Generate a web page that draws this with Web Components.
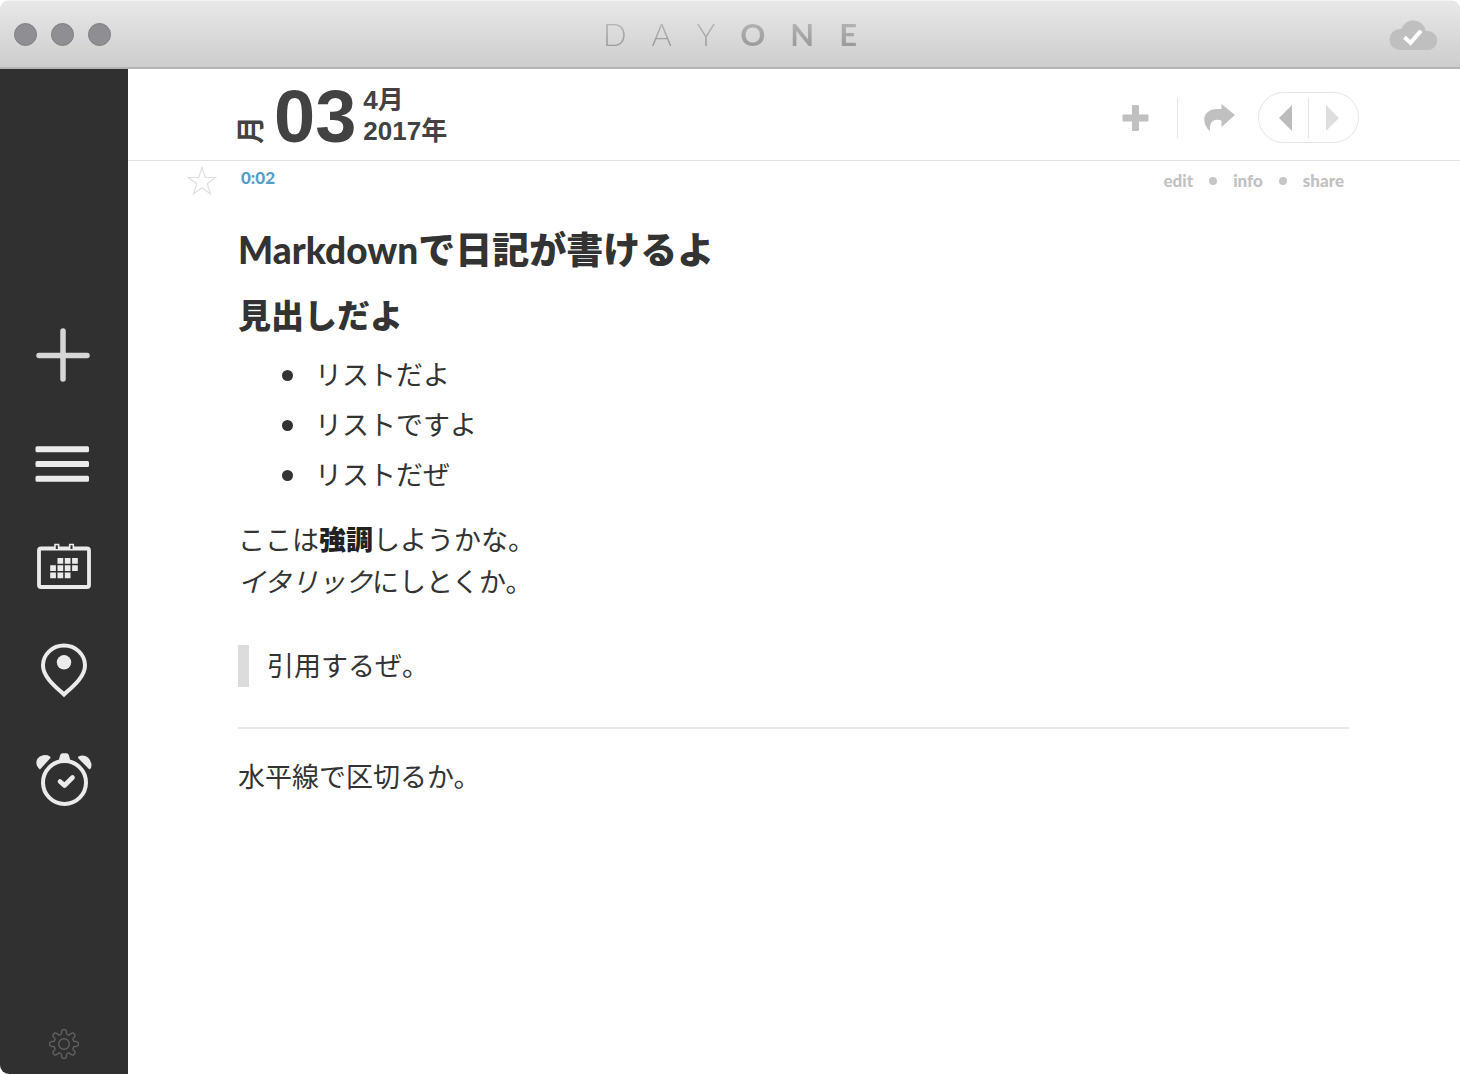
<!DOCTYPE html>
<html lang="ja">
<head>
<meta charset="utf-8">
<title>Day One</title>
<style>
  html, body { margin: 0; background: #fff; }
  body { font-family: Lato, "Noto Sans CJK JP", sans-serif; color: #333; }
</style>
</head>
<body>
<day-window>
  <title-bar slot="title"></title-bar>
  <side-bar slot="side"></side-bar>
  <entry-header slot="main" weekday="月" day="03" month="4月" year="2017年"></entry-header>
  <entry-meta slot="main" time="0:02"></entry-meta>
  <entry-body slot="main"></entry-body>
</day-window>

<script>
const define = (name, html, setup) => {
  const template = document.createElement('template');
  template.innerHTML = `<style>
    *, *::before { box-sizing: border-box; }
    button { appearance: none; border: 0; padding: 0; margin: 0; background: none; font: inherit; color: inherit; cursor: pointer; }
    svg { display: block; }
  </style>` + html;
  customElements.define(name, class extends HTMLElement {
    constructor() {
      super();
      this.attachShadow({ mode: 'open' }).append(template.content.cloneNode(true));
    }
    connectedCallback() {
      this.shadowRoot.querySelectorAll('[data-attr]').forEach(el => {
        el.textContent = this.getAttribute(el.dataset.attr);
      });
      if (setup) setup(this.shadowRoot);
    }
  });
};

// Outline of the settings gear: eight rounded teeth around a ring.
const gearOutline = () => {
  const points = [];
  for (let a = 0; a < 360; a += 3) {
    const wave = Math.cos(a * 8 * Math.PI / 180);
    const r = 12.2 + 2.3 * Math.tanh(2 * wave);
    const t = a * Math.PI / 180;
    points.push((64 + r * Math.sin(t)).toFixed(2) + ' ' + (1044 - r * Math.cos(t)).toFixed(2));
  }
  return 'M' + points.join('L') + 'Z';
};

define('day-window', `
  <style>
    :host { display: flex; flex-direction: column; min-height: 100vh; border-radius: 9px; overflow: hidden; background: #fff; }
    .body { flex: 1; display: flex; }
    main { flex: 1; min-width: 0; }
  </style>
  <slot name="title"></slot>
  <div class="body"><slot name="side"></slot><main><slot name="main"></slot></main></div>
`);

define('title-bar', `
  <style>
    :host { display: block; }
    header { display: grid; grid-template-columns: 1fr auto 1fr; align-items: center; height: 69px; padding: 0 14px;
      background: linear-gradient(#e8e8e8, #cdcdcd); border-top: 1px solid #f3f3f3; border-bottom: 2px solid #b4b4b4; }
    .lights { display: flex; gap: 14px; }
    .lights button { width: 23px; height: 23px; border-radius: 50%; background: #8f8e92; border: 1px solid #807f83; }
    .name { display: flex; gap: 25px; margin: 0; font-size: 31px; line-height: 40px; font-weight: 300;
      background: linear-gradient(#b4b4b4 20%, #9a9a9a 80%); -webkit-background-clip: text; background-clip: text; color: transparent; }
    .name b { font-weight: 700; }
    .sync { justify-self: end; margin-right: 9px; }
  </style>
  <header>
    <div class="lights">
      <button aria-label="Close"></button><button aria-label="Minimize"></button><button aria-label="Zoom"></button>
    </div>
    <h1 class="name"><span>D</span><span>A</span><span>Y</span><b>O</b><b>N</b><b>E</b></h1>
    <button class="sync" aria-label="Sync status">
      <svg width="48" height="32" viewBox="0 0 48 32">
        <path d="M11 32a10.500 10.500 0 0 1 0-21h1.200a12.700 12.700 0 0 1 24.600 2.200A9.500 9.500 0 1 1 38 32z" fill="#bfbfbf"/>
        <path d="M15.500 19.300l6 5.500 10.500-12" fill="none" stroke="#fff" stroke-width="4"/>
      </svg>
    </button>
  </header>
`);

define('side-bar', `
  <style>
    :host { display: block; flex: none; width: 128px; background: #303030; }
    nav { display: flex; flex-direction: column; height: 100%; padding-top: 233px; }
    button { width: 128px; height: 106px; }
    .settings { height: 60px; margin-top: auto; }
  </style>
  <nav>
    <button aria-label="New entry">
      <svg width="128" height="106" viewBox="0 302 128 106"><path d="M39 355.500h48M63 331v48" stroke="#d6d6d6" stroke-width="5.500" stroke-linecap="round"/></svg>
    </button>
    <button aria-label="Timeline">
      <svg width="128" height="106" viewBox="0 408 128 106"><path fill="#ebebeb" d="M37 446.300h50.500q1.500 0 1.500 1.500v3q0 1.500-1.500 1.500H37q-1.500 0-1.500-1.500v-3q0-1.500 1.500-1.500zM37 461h50.500q1.500 0 1.500 1.500v3q0 1.500-1.500 1.500H37q-1.500 0-1.500-1.500v-3q0-1.500 1.500-1.500zM37 475.700h50.500q1.500 0 1.500 1.500v3q0 1.500-1.500 1.500H37q-1.500 0-1.500-1.500v-3q0-1.500 1.500-1.500z"/></svg>
    </button>
    <button aria-label="Calendar">
      <svg width="128" height="106" viewBox="0 514 128 106">
        <rect x="39" y="548.500" width="50" height="38.500" rx="2" fill="none" stroke="#ebebeb" stroke-width="3.800"/>
        <path d="M55 549v-4.500h3.600v4.500M69.700 549v-4.500h3.600v4.500" fill="#303030" stroke="#ebebeb" stroke-width="1.600"/>
        <path fill="#ebebeb" d="M57.500 558h5.700v5.700h-5.700zM64.800 558h5.700v5.700h-5.700zM72.100 558h5.700v5.700h-5.700zM50.200 565.300h5.700v5.700h-5.700zM57.500 565.300h5.700v5.700h-5.700zM64.800 565.300h5.700v5.700h-5.700zM72.100 565.300h5.700v5.700h-5.700zM50.200 572.600h5.700v5.700h-5.700zM57.500 572.600h5.700v5.700h-5.700zM64.800 572.600h5.700v5.700h-5.700z"/>
      </svg>
    </button>
    <button aria-label="Places">
      <svg width="128" height="106" viewBox="0 620 128 106">
        <path d="M64 694.500C57 688 43 677.500 43 665.500a21 20 0 0 1 42 0C85 677.500 71 688 64 694.500z" fill="none" stroke="#ebebeb" stroke-width="4"/>
        <circle cx="64" cy="662.300" r="7.200" fill="#ebebeb"/>
      </svg>
    </button>
    <button aria-label="Reminders">
      <svg width="128" height="106" viewBox="0 726 128 106">
        <circle cx="64.500" cy="782.500" r="21.500" fill="none" stroke="#ebebeb" stroke-width="4"/>
        <path fill="#ebebeb" d="M40 769.500a9 9 0 0 1-2.800-10.500 9.500 9.500 0 0 1 12.800-2.500q1 1 0 2zM89.500 769.500q2-1 2-4a11 11 0 0 0-3.500-8 9 9 0 0 0-9.500-1q-1 1 0 2zM58.500 761l1.700-6q.6-1.800 2.300-1.800h4q1.700 0 2.300 1.800l1.700 6z"/>
        <path d="M60 781.500l4.500 4 8-8" fill="none" stroke="#ebebeb" stroke-width="4.600" stroke-linecap="round" stroke-linejoin="round"/>
      </svg>
    </button>
    <button class="settings" aria-label="Settings">
      <svg width="128" height="60" viewBox="0 1014 128 60">
        <g fill="none" stroke="#606060" stroke-width="1.400" stroke-linejoin="round">
          <path id="gear"/>
          <circle cx="64" cy="1044" r="5.300"/>
        </g>
      </svg>
    </button>
  </nav>
`, root => root.getElementById('gear').setAttribute('d', gearOutline()));

define('entry-header', `
  <style>
    :host { display: block; }
    header { display: flex; justify-content: space-between; align-items: flex-start; height: 92px; padding: 0 101px 0 110px; border-bottom: 1px solid #e2e2e2; }
    .date { display: flex; margin: 0; color: #424242; font-family: "Liberation Sans", "Noto Sans CJK JP", sans-serif; font-weight: 700; }
    .weekday { width: 28px; height: 28px; margin-top: 47px; font-size: 28px; line-height: 28px; transform: rotate(-90deg); }
    .day { margin: 11px 7px 0 8px; font-size: 74px; line-height: 74px; }
    .month { display: flex; flex-direction: column; margin-top: 16px; font-size: 26px; line-height: 31px; }
    .tools { display: flex; align-items: center; margin-top: 23px; height: 51px; }
    .rule { width: 1px; height: 40px; background: #e4e4e4; }
    .add { width: 28px; margin-right: 27px; }
    .forward { width: 32px; margin: 0 22px 0 26px; }
    .pager { display: flex; align-items: center; width: 101px; height: 51px; border: 1px solid #e4e4e4; border-radius: 26px; }
    .pager button { flex: 1; height: 100%; display: flex; align-items: center; justify-content: center; }
  </style>
  <header>
    <h2 class="date">
      <span class="weekday" data-attr="weekday"></span>
      <span class="day" data-attr="day"></span>
      <span class="month"><span data-attr="month"></span><span data-attr="year"></span></span>
    </h2>
    <div class="tools">
      <button class="add" aria-label="Add">
        <svg width="28" height="28" viewBox="0 0 28 28"><path d="M11 1h5q1 0 1 1v8.500h8.500q1 0 1 1v5q0 1-1 1H17V26q0 1-1 1h-5q-1 0-1-1v-8.500H1.500q-1 0-1-1v-5q0-1 1-1H10V2q0-1 1-1z" fill="#c0c0c0"/></svg>
      </button>
      <span class="rule"></span>
      <button class="forward" aria-label="Forward">
        <svg width="32" height="28" viewBox="0 0 32 28"><path d="M17.500 0L31 11 17.500 23V16.500C11 14.500 5 16 6 27.500-4 18-.5 5 13 5h4.500z" fill="#c0c0c0"/></svg>
      </button>
      <div class="pager">
        <button aria-label="Previous day"><svg width="20" height="26" viewBox="0 0 20 26"><path d="M18 0v26L5 13z" fill="#bcbcbc"/></svg></button>
        <span class="rule"></span>
        <button aria-label="Next day"><svg width="20" height="26" viewBox="0 0 20 26"><path d="M2 0v26l13-13z" fill="#dedede"/></svg></button>
      </div>
    </div>
  </header>
`);

define('entry-meta', `
  <style>
    :host { display: block; font-size: 17px; line-height: 22px; font-weight: 900; }
    .row { display: flex; align-items: flex-start; padding: 5px 116px 0 59px; }
    .star { margin-right: 24px; }
    time { margin-top: 1px; color: #559dcb; font-weight: 900; }
    .actions { display: flex; align-items: center; gap: 16px; margin-left: auto; margin-top: 4px; color: #c2c2c2; }
    .actions i { width: 8px; height: 8px; border-radius: 50%; background: #c6c6c6; }
  </style>
  <div class="row">
    <button class="star" aria-label="Star entry">
      <svg width="30" height="30" viewBox="0 0 30 30"><path d="M15 1.500l3.300 10h10.400l-8.400 6.300 3.200 10.200-8.500-6.200-8.500 6.200 3.200-10.200-8.400-6.300h10.400z" fill="none" stroke="#e0e0e0" stroke-width="1.200"/></svg>
    </button>
    <time data-attr="time"></time>
    <div class="actions"><button>edit</button><i></i><button>info</button><i></i><button>share</button></div>
  </div>
`);

define('entry-body', `
  <style>
    :host { display: block; }
    article { padding: 27px 111px 42px 110px; font-size: 27px; line-height: 42px; }
    h1, h2, p, ul, blockquote { margin: 0; }
    h1, h2 { font-weight: 900; }
    h1 { font-size: 37px; line-height: 54px; }
    h2 { margin-top: 17px; font-size: 33px; line-height: 42px; }
    ul { display: flex; flex-direction: column; gap: 8px; margin: 18px 0 23px; padding-left: 44px; list-style: none; }
    li { display: flex; align-items: center; gap: 22px; }
    li::before { content: ""; width: 11px; height: 11px; border-radius: 50%; background: #333; }
    strong { font-weight: 900; color: #222; }
    blockquote { margin: 42px 0 40px; padding-left: 18px; border-left: 11px solid #dcdcdc; }
    hr { height: 2px; margin: 0 0 27px; border: 0; background: #e8e8e8; }
  </style>
  <article>
    <h1>Markdownで日記が書けるよ</h1>
    <h2>見出しだよ</h2>
    <ul><li>リストだよ</li><li>リストですよ</li><li>リストだぜ</li></ul>
    <p>ここは<strong>強調</strong>しようかな。<br><em>イタリック</em>にしとくか。</p>
    <blockquote>引用するぜ。</blockquote>
    <hr>
    <p>水平線で区切るか。</p>
  </article>
`);
</script>
</body>
</html>
